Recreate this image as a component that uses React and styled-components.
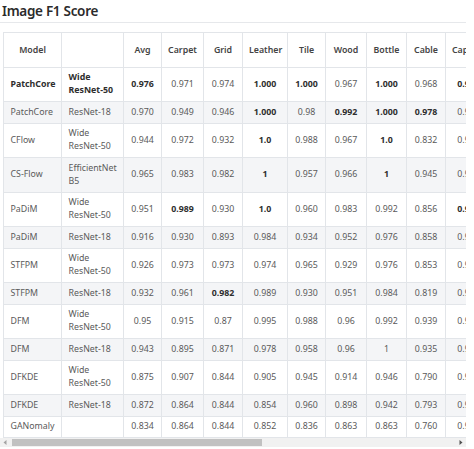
import React from "react";
import styled, { createGlobalStyle } from "styled-components";

const Global = createGlobalStyle`
  *, *::before, *::after { box-sizing: border-box; }
  html, body { margin: 0; padding: 0; background: #fff; }
  body { font-family: "Noto Sans", "Open Sans", sans-serif; }
`;

const Page = styled.div`
  width: 466px;
  padding-top: 3px;
`;

const Heading = styled.h2`
  margin: 0;
  padding: 0 0 3px 2px;
  font-size: 13.5px;
  line-height: 16px;
  font-weight: 600;
  letter-spacing: -0.3px;
  color: #2b2b2b;
  border-bottom: 1px solid #e6e8eb;
`;

const Scroller = styled.div`
  margin-top: 9px;
  overflow: hidden;
  padding-left: 3px;
`;

const Table = styled.table`
  border-collapse: collapse;
  table-layout: fixed;
  width: 818px;
  font-size: 8.8px;
  line-height: 13px;
  color: #5a5a5a;
`;

const Th = styled.th`
  border: 1px solid #e2e5e9;
  padding: 10.5px 6px 10px;
  font-weight: 600;
  color: #444;
  text-align: center;
  white-space: nowrap;
  background: #fff;
`;

const Row = styled.tr`
  background: ${(p) => (p.$striped ? "#f4f5f7" : "#fff")};
`;

const Td = styled.td`
  border: 1px solid #e2e5e9;
  padding: 3.75px 6.5px;
  text-align: ${(p) => (p.$left ? "left" : "center")};
  font-weight: ${(p) => (p.$bold ? 700 : 400)};
  color: ${(p) => (p.$bold ? "#2e2e2e" : "#5a5a5a")};
`;

const ScrollTrack = styled.div`
  display: flex;
  align-items: center;
  height: 9px;
  background: #f1f1f1;
`;

const Arrow = styled.div`
  width: 10px;
  flex: none;
  display: flex;
  justify-content: center;
  align-items: center;
`;

const Thumb = styled.div`
  height: 7px;
  background: #c1c1c1;
  margin-left: 2px;
`;

const Spacer = styled.div`
  flex: 1;
`;

const columns = [
  ["Model", 58],
  ["", 62],
  ["Avg", 38],
  ["Carpet", 42],
  ["Grid", 39],
  ["Leather", 45],
  ["Tile", 38],
  ["Wood", 41],
  ["Bottle", 40],
  ["Cable", 39],
  ["Capsule", 46],
  ["Hazelnut", 50],
  ["Metal Nut", 54],
  ["Pill", 36],
  ["Screw", 38],
  ["Toothbrush", 60],
  ["Transistor", 56],
  ["Zipper", 40],
];

const rows = [
  ["*PatchCore", "*Wide ResNet-50", "*0.976", "0.971", "0.974", "*1.000", "*1.000", "0.967", "*1.000", "0.968", "*0.982", "*1.000", "0.984", "0.940", "0.943", "0.938", "*1.000", "*0.979"],
  ["PatchCore", "ResNet-18", "0.970", "0.949", "0.946", "*1.000", "0.98", "*0.992", "*1.000", "*0.978", "0.969", "*1.000", "*0.989", "0.940", "0.932", "0.935", "0.974", "0.967"],
  ["CFlow", "Wide ResNet-50", "0.944", "0.972", "0.932", "*1.0", "0.988", "0.967", "*1.0", "0.832", "0.939", "*1.0", "0.979", "0.924", "*0.971", "0.870", "0.818", "0.967"],
  ["CS-Flow", "EfficientNet B5", "0.965", "0.983", "0.982", "*1", "0.957", "0.966", "*1", "0.945", "0.952", "*1", "0.978", "0.923", "0.932", "0.933", "0.949", "0.962"],
  ["PaDiM", "Wide ResNet-50", "0.951", "*0.989", "0.930", "*1.0", "0.960", "0.983", "0.992", "0.856", "*0.982", "0.937", "0.978", "*0.946", "0.895", "0.952", "0.914", "0.947"],
  ["PaDiM", "ResNet-18", "0.916", "0.930", "0.893", "0.984", "0.934", "0.952", "0.976", "0.858", "0.960", "0.836", "0.974", "0.932", "0.879", "0.923", "0.796", "0.915"],
  ["STFPM", "Wide ResNet-50", "0.926", "0.973", "0.973", "0.974", "0.965", "0.929", "0.976", "0.853", "0.920", "0.972", "0.974", "0.922", "0.884", "0.833", "0.815", "0.931"],
  ["STFPM", "ResNet-18", "0.932", "0.961", "*0.982", "0.989", "0.930", "0.951", "0.984", "0.819", "0.918", "0.993", "0.973", "0.918", "0.887", "0.984", "0.790", "0.908"],
  ["DFM", "Wide ResNet-50", "0.95", "0.915", "0.87", "0.995", "0.988", "0.96", "0.992", "0.939", "0.965", "0.971", "0.942", "0.956", "0.906", "0.966", "0.914", "0.971"],
  ["DFM", "ResNet-18", "0.943", "0.895", "0.871", "0.978", "0.958", "0.96", "1", "0.935", "0.965", "0.966", "0.942", "0.956", "0.914", "0.901", "0.866", "0.976"],
  ["DFKDE", "Wide ResNet-50", "0.875", "0.907", "0.844", "0.905", "0.945", "0.914", "0.946", "0.790", "0.914", "0.817", "0.894", "0.922", "0.855", "0.845", "0.722", "0.910"],
  ["DFKDE", "ResNet-18", "0.872", "0.864", "0.844", "0.854", "0.960", "0.898", "0.942", "0.793", "0.908", "0.827", "0.894", "0.916", "0.859", "0.853", "0.756", "0.916"],
  ["GANomaly", "", "0.834", "0.864", "0.844", "0.852", "0.836", "0.863", "0.863", "0.760", "0.905", "0.777", "0.894", "0.916", "0.853", "0.833", "0.571", "0.881"],
];

function ScrollBar() {
  return (
    <ScrollTrack>
      <Arrow>
        <svg width="4" height="5" viewBox="0 0 4 5">
          <path d="M3.5 0 L0.5 2.5 L3.5 5 Z" fill="#a3a3a3" />
        </svg>
      </Arrow>
      <Thumb style={{ width: 250 }} />
      <Spacer />
      <Arrow>
        <svg width="4" height="5" viewBox="0 0 4 5">
          <path d="M0.5 0 L3.5 2.5 L0.5 5 Z" fill="#505050" />
        </svg>
      </Arrow>
    </ScrollTrack>
  );
}

export default function App() {
  return (
    <Page>
      <Global />
      <Heading>Image F1 Score</Heading>
      <Scroller>
        <Table>
          <colgroup>
            {columns.map(([name, w], i) => (
              <col key={i} style={{ width: w }} />
            ))}
          </colgroup>
          <thead>
            <tr>
              {columns.map(([name], i) => (
                <Th key={i}>{name}</Th>
              ))}
            </tr>
          </thead>
          <tbody>
            {rows.map((r, ri) => (
              <Row key={ri} $striped={ri % 2 === 1}>
                {r.map((c, ci) => {
                  const bold = c.startsWith("*");
                  return (
                    <Td key={ci} $bold={bold} $left={ci < 2}>
                      {bold ? c.slice(1) : c}
                    </Td>
                  );
                })}
              </Row>
            ))}
          </tbody>
        </Table>
      </Scroller>
      <ScrollBar />
    </Page>
  );
}
